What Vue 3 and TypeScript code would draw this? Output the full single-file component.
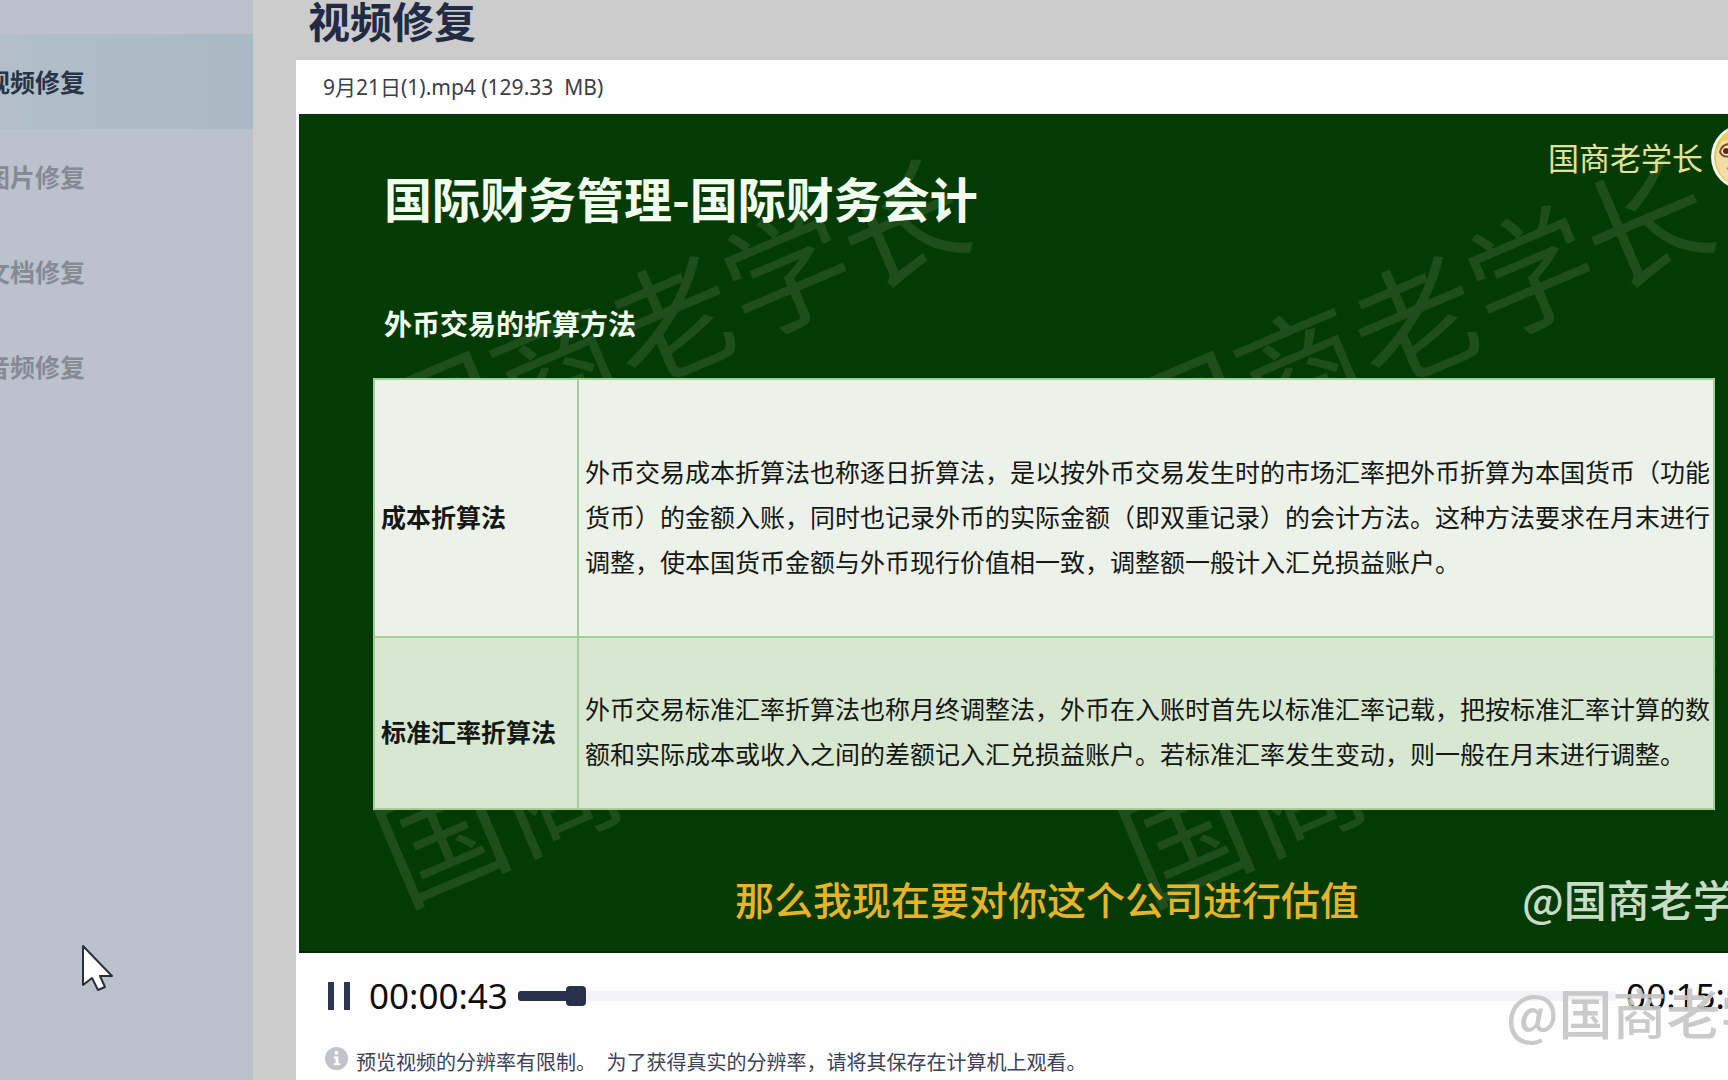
<script setup lang="ts">
import { computed, ref } from 'vue'

interface NavItem {
  label: string
  active: boolean
}

interface MethodRow {
  name: string
  lines: string[]
}

const navItems: NavItem[] = [
  { label: '视频修复', active: true },
  { label: '图片修复', active: false },
  { label: '文档修复', active: false },
  { label: '音频修复', active: false },
]

const methods: MethodRow[] = [
  {
    name: '成本折算法',
    lines: [
      '外币交易成本折算法也称逐日折算法，是以按外币交易发生时的市场汇率把外币折算为本国货币（功能',
      '货币）的金额入账，同时也记录外币的实际金额（即双重记录）的会计方法。这种方法要求在月末进行',
      '调整，使本国货币金额与外币现行价值相一致，调整额一般计入汇兑损益账户。',
    ],
  },
  {
    name: '标准汇率折算法',
    lines: [
      '外币交易标准汇率折算法也称月终调整法，外币在入账时首先以标准汇率记载，把按标准汇率计算的数',
      '额和实际成本或收入之间的差额记入汇兑损益账户。若标准汇率发生变动，则一般在月末进行调整。',
    ],
  },
]

const marks: string[] = ['mark-a', 'mark-b', 'mark-c', 'mark-d']

const duration = 955
const position = ref(43)

function clock(total: number): string {
  const pad = (n: number): string => String(n).padStart(2, '0')
  return [Math.floor(total / 3600), Math.floor(total / 60) % 60, total % 60].map(pad).join(':')
}

const elapsed = computed(() => clock(Number(position.value)))
const played = computed(() => `${(Number(position.value) / duration) * 100}%`)
</script>

<template>
  <div class="app">
    <nav class="sidebar" aria-label="修复类型">
      <a
        v-for="item in navItems"
        :key="item.label"
        href="#"
        class="nav-item"
        :class="{ active: item.active }"
      >{{ item.label }}</a>
    </nav>

    <main class="main">
      <h1 class="page-title">视频修复</h1>

      <section class="panel">
        <p class="file-name">9月21日(1).mp4 (129.33&nbsp; MB)</p>

        <div class="video">
          <span v-for="mark in marks" :key="mark" class="mark" :class="mark" aria-hidden="true">国商老学长</span>

          <header class="slide-head">
            <h2 class="slide-title">国际财务管理-国际财务会计</h2>
            <div class="brand">
              <span>国商老学长</span>
              <svg class="avatar" viewBox="0 0 66 66" aria-hidden="true">
                <circle cx="33" cy="33" r="33" fill="#f7fbe9" />
                <circle cx="33" cy="33" r="30" fill="#e9c56c" />
                <circle cx="33" cy="34" r="28" fill="#f3dca6" />
                <path d="M6 19 Q16 3 33 3 T60 19 Q46 14 33 14 T6 19Z" fill="#e8cf58" />
                <path d="M9 28 Q11 20 19 20 V32 Q12 34 9 28Z" fill="#fff3d8" stroke="#7c4d1e" stroke-width="2" />
                <circle cx="15" cy="27" r="3" fill="#5a2c14" />
                <circle cx="46" cy="26" r="6" fill="#fff3d8" stroke="#7c4d1e" stroke-width="2" />
                <path d="M16 44 Q32 54 50 44" fill="none" stroke="#b87a3c" stroke-width="2" />
              </svg>
            </div>
          </header>

          <h3 class="slide-subtitle">外币交易的折算方法</h3>

          <table class="methods">
            <tbody>
              <tr v-for="method in methods" :key="method.name">
                <th scope="row">{{ method.name }}</th>
                <td>
                  <span v-for="line in method.lines" :key="line" class="line">{{ line }}</span>
                </td>
              </tr>
            </tbody>
          </table>

          <footer class="slide-foot">
            <p class="caption">那么我现在要对你这个公司进行估值</p>
            <p class="credit">@国商老学长</p>
          </footer>
        </div>

        <div class="player">
          <button class="pause" type="button" aria-label="暂停">
            <svg viewBox="0 0 22 28" aria-hidden="true">
              <path d="M0 0h6v28H0zM16 0h6v28h-6z" fill="#2c3450" />
            </svg>
          </button>
          <span class="time">{{ elapsed }}</span>
          <input
            v-model="position"
            class="seek"
            type="range"
            min="0"
            :max="duration"
            aria-label="播放进度"
            :style="{ '--played': played }"
          />
          <span class="time">{{ clock(duration) }}</span>
          <span class="overlay-mark" aria-hidden="true">@国商老学长</span>
        </div>

        <p class="hint">
          <svg class="info" viewBox="0 0 24 24" aria-hidden="true">
            <circle cx="12" cy="12" r="12" fill="#c2c2ca" />
            <circle cx="12" cy="6" r="2" fill="#fff" />
            <path d="M9 10h5v7h2v2H9v-2h2v-5H9z" fill="#fff" />
          </svg>
          <span>预览视频的分辨率有限制。&nbsp; 为了获得真实的分辨率，请将其保存在计算机上观看。</span>
        </p>
      </section>
    </main>

    <svg class="pointer" viewBox="0 0 32 48" aria-hidden="true">
      <path
        d="M1 2 L1 41 L10 34 L16 46 L23 43 L18 32 L30 32 Z"
        fill="#fff"
        stroke="#2b2f3c"
        stroke-width="2"
        stroke-linejoin="round"
      />
    </svg>
  </div>
</template>

<style>
body {
  margin: 0;
  overflow: hidden;
  background: #cccccc;
}
</style>

<style scoped>
.app {
  position: relative;
  display: flex;
  min-height: 100vh;
  overflow: hidden;
  background: #cccccc;
  font-family: "Noto Sans", "Noto Sans CJK SC", sans-serif;
}

h1,
h2,
h3,
p {
  margin: 0;
}

.sidebar {
  flex: none;
  box-sizing: border-box;
  width: 253px;
  padding-top: 34px;
  overflow: hidden;
  background: #bcc2cb;
}

.nav-item {
  display: flex;
  justify-content: flex-end;
  align-items: center;
  height: 95px;
  padding-right: 168px;
  color: #858b95;
  font-size: 25px;
  font-weight: 700;
  line-height: 34px;
  white-space: nowrap;
  text-decoration: none;
}

.nav-item.active {
  background: linear-gradient(90deg, #b2bfc9, #a9b9c5);
  color: #283448;
}

.main {
  flex: 1;
  min-width: 0;
  display: flex;
  flex-direction: column;
  padding-left: 43px;
}

.page-title {
  padding-left: 12px;
  margin-bottom: 16px;
  color: #222b45;
  font-size: 42px;
  font-weight: 600;
  line-height: 44px;
}

.panel {
  flex: 1;
  margin-right: -100px;
  padding: 0 3px;
  background: #fefefe;
}

.file-name {
  padding-left: 24px;
  color: #3c3f4a;
  font-size: 21px;
  line-height: 54px;
}

.video {
  position: relative;
  z-index: 0;
  overflow: hidden;
  padding: 10px 110px 28px 74px;
  border-bottom: 2px solid #0c210a;
  background: #043a03;
  font-family: "Noto Sans CJK SC", sans-serif;
}

.mark {
  position: absolute;
  z-index: -1;
  width: 640px;
  color: #1d4e1b;
  font-size: 125px;
  line-height: 140px;
  text-align: center;
  white-space: nowrap;
  transform: rotate(-23deg);
}

.mark-a {
  left: 50px;
  top: 131px;
}

.mark-b {
  left: 794px;
  top: 131px;
}

.mark-c {
  left: 50px;
  top: 550px;
}

.mark-d {
  left: 794px;
  top: 550px;
}

.slide-head {
  display: flex;
  justify-content: space-between;
  align-items: flex-start;
  margin-right: -62px;
}

.slide-title {
  margin-top: 43px;
  padding-left: 11px;
  color: #f2fdf0;
  font-size: 48px;
  font-weight: 700;
  line-height: 60px;
}

.brand {
  display: flex;
  align-items: center;
  gap: 8px;
  color: #e4e29a;
  font-size: 31px;
  line-height: 62px;
}

.avatar {
  display: block;
  width: 66px;
  height: 66px;
}

.slide-subtitle {
  margin-top: 76px;
  padding-left: 11px;
  color: #f2fdf0;
  font-size: 28px;
  font-weight: 700;
  line-height: 40px;
}

.methods {
  width: 100%;
  margin-top: 35px;
  border-collapse: collapse;
  table-layout: fixed;
  background: #ecf1e9;
  color: #141814;
  font-size: 25px;
  line-height: 45px;
}

.methods th,
.methods td {
  padding: 16px 0 0 6px;
  border: 2px solid #a3cf93;
  text-align: left;
  vertical-align: middle;
  white-space: nowrap;
}

.methods th {
  width: 196px;
  font-weight: 700;
}

.methods tr:first-child {
  height: 258px;
}

.methods tr:last-child {
  height: 172px;
  background: #d7e7d1;
}

.line {
  display: block;
}

.slide-foot {
  display: flex;
  gap: 163px;
  margin-top: 63px;
  padding-left: 362px;
  line-height: 50px;
  white-space: nowrap;
}

.caption {
  color: #e6b32b;
  font-size: 39px;
  font-weight: 500;
}

.credit {
  color: #c8dcc8;
  font-size: 43px;
  font-weight: 500;
}

.player {
  position: relative;
  display: flex;
  align-items: center;
  gap: 10px;
  height: 86px;
  padding: 0 60px 0 29px;
}

.pause {
  display: flex;
  width: 31px;
  padding: 0;
  border: 0;
  background: none;
}

.pause svg {
  width: 22px;
  height: 28px;
}

.time {
  color: #0c0c10;
  font-size: 35px;
  line-height: 44px;
}

.seek {
  flex: 1;
  min-width: 0;
  height: 20px;
  margin: 0;
  appearance: none;
  background: none;
}

.seek::-webkit-slider-runnable-track {
  height: 10px;
  border-radius: 3px;
  background: linear-gradient(90deg, #28304c var(--played), #f3f3f5 var(--played));
}

.seek::-webkit-slider-thumb {
  width: 20px;
  height: 20px;
  margin-top: -5px;
  border-radius: 4px;
  appearance: none;
  background: #28304c;
}

.overlay-mark {
  position: absolute;
  top: 24px;
  left: 1207px;
  color: rgba(198, 198, 198, 0.92);
  font-family: "Noto Sans CJK SC", sans-serif;
  font-size: 54px;
  font-weight: 500;
  line-height: 70px;
  white-space: nowrap;
}

.hint {
  display: flex;
  gap: 8px;
  margin-top: 8px;
  padding-left: 26px;
  color: #3d4258;
  font-size: 20px;
  line-height: 32px;
}

.info {
  width: 23px;
  height: 23px;
}

.pointer {
  position: absolute;
  top: 944px;
  left: 82px;
  width: 32px;
  height: 48px;
}
</style>
